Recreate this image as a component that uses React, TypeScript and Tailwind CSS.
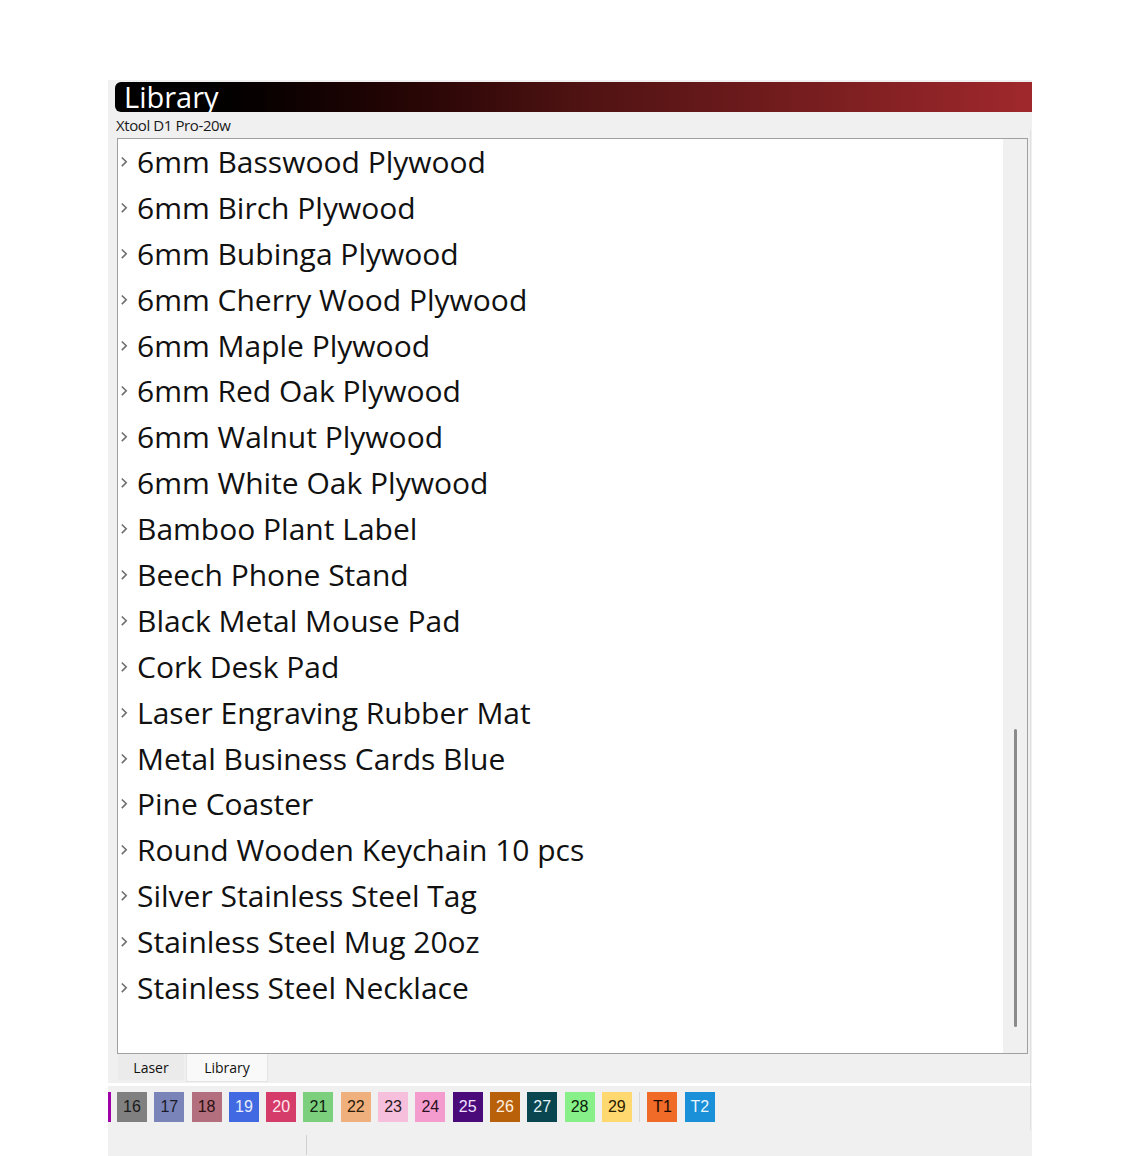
import React from "react";

const items = [
  "6mm Basswood Plywood",
  "6mm Birch Plywood",
  "6mm Bubinga Plywood",
  "6mm Cherry Wood Plywood",
  "6mm Maple Plywood",
  "6mm Red Oak Plywood",
  "6mm Walnut Plywood",
  "6mm White Oak Plywood",
  "Bamboo Plant Label",
  "Beech Phone Stand",
  "Black Metal Mouse Pad",
  "Cork Desk Pad",
  "Laser Engraving Rubber Mat",
  "Metal Business Cards Blue",
  "Pine Coaster",
  "Round Wooden Keychain 10 pcs",
  "Silver Stainless Steel Tag",
  "Stainless Steel Mug 20oz",
  "Stainless Steel Necklace",
];

const swatches: { label: string; cls: string }[] = [
  { label: "16", cls: "bg-[#808080] text-[#1a1a1a]" },
  { label: "17", cls: "bg-[#7a84b8] text-[#1a1a2a]" },
  { label: "18", cls: "bg-[#b46f7e] text-[#2a1010]" },
  { label: "19", cls: "bg-[#4169e1] text-[#e8eeff]" },
  { label: "20", cls: "bg-[#d63c6a] text-[#ffe8ee]" },
  { label: "21", cls: "bg-[#7ccf7c] text-[#102010]" },
  { label: "22", cls: "bg-[#f0b07e] text-[#2a1a08]" },
  { label: "23", cls: "bg-[#f6bfdc] text-[#2a1a22]" },
  { label: "24", cls: "bg-[#f59ccf] text-[#2a1020]" },
  { label: "25", cls: "bg-[#4b0a7a] text-[#efe0ff]" },
  { label: "26", cls: "bg-[#b8600a] text-[#fff0e0]" },
  { label: "27", cls: "bg-[#0a4650] text-[#e0f4f8]" },
  { label: "28", cls: "bg-[#88f088] text-[#082008]" },
  { label: "29", cls: "bg-[#ffd870] text-[#2a2000]" },
];

function Chevron() {
  return (
    <svg width="8" height="14" viewBox="0 0 8 14" className="shrink-0">
      <path d="M1.8 2.5 L6.2 6.8 L1.8 11.1" fill="none" stroke="#6e6e6e" strokeWidth="1.6" />
    </svg>
  );
}

export default function App() {
  return (
    <div className="w-[1140px] h-[1156px] bg-white pt-[80px] pl-[108px] overflow-hidden" style={{ fontFamily: '"Open Sans", "Noto Sans", sans-serif' }}>
      <div className="w-[924px] h-[1076px] bg-[#f0f0f0] flex flex-col relative">
        <div className="ml-[7px] mt-[2px] h-[30px] rounded-l-[6px] bg-gradient-to-r from-[#000000] via-[#4e1212] to-[#a0282c] overflow-hidden">
          <div className="pl-[9px] text-white text-[29px] leading-[34px] mt-[-2px]">Library</div>
        </div>
        <div className="h-[26px] pl-[8px] text-[15px] leading-[26px] text-[#1a1a1a] tracking-[-0.4px]">Xtool D1 Pro-20w</div>
        <div className="ml-[9px] w-[911px] h-[916px] border-[1.5px] border-[#a0a0a0] bg-white flex">
          <div className="flex-1">
            {items.map((t) => (
              <div key={t} className="h-[45.9px] flex items-center pl-[2px] gap-[9px]">
                <Chevron />
                <span className="text-[30px] text-[#111] leading-none">{t}</span>
              </div>
            ))}
          </div>
          <div className="w-[24px] bg-[#f0f0f0] flex flex-col items-center">
            <div className="mt-[590px] w-[3px] h-[298px] bg-[#8a8a8a] rounded-full" />
          </div>
        </div>
        <div className="flex ml-[10px] h-[29px] items-start">
          <div className="w-[66px] h-[26px] bg-[#ebebeb] text-[14px] text-[#111] flex items-center justify-center">Laser</div>
          <div className="ml-[2px] w-[82px] h-[28px] bg-[#f9f9f9] border border-[#e4e4e4] border-t-0 text-[14px] text-[#111] flex items-center justify-center">Library</div>
        </div>
        <div className="h-[3px] bg-white" />
        <div className="flex items-center mt-[6px] h-[30px]">
          <div className="w-[3px] h-[30px] bg-[#a000a8]" />
          <div className="flex gap-[7.3px] ml-[6px]" style={{ fontFamily: '"Liberation Sans", Arial, sans-serif' }}>
            {swatches.map((s) => (
              <div key={s.label} className={`w-[30px] h-[30px] flex items-center justify-center text-[16px] ${s.cls}`}>{s.label}</div>
            ))}
            <div className="w-[1px] h-[30px] bg-[#d8d8d8]" />
            <div className="w-[30px] h-[30px] flex items-center justify-center text-[16px] bg-[#f06a28] text-[#1a0a00]">T1</div>
            <div className="w-[30px] h-[30px] flex items-center justify-center text-[16px] bg-[#1a90d8] text-[#e8f6ff]">T2</div>
          </div>
        </div>
        <div className="ml-[198px] mt-[13px] w-[1px] h-[20px] bg-[#d0d0d0]" />
        <div className="absolute right-[1px] top-[50px] w-[1px] h-[1000px] bg-[#e0e0e0]" />
      </div>
    </div>
  );
}
